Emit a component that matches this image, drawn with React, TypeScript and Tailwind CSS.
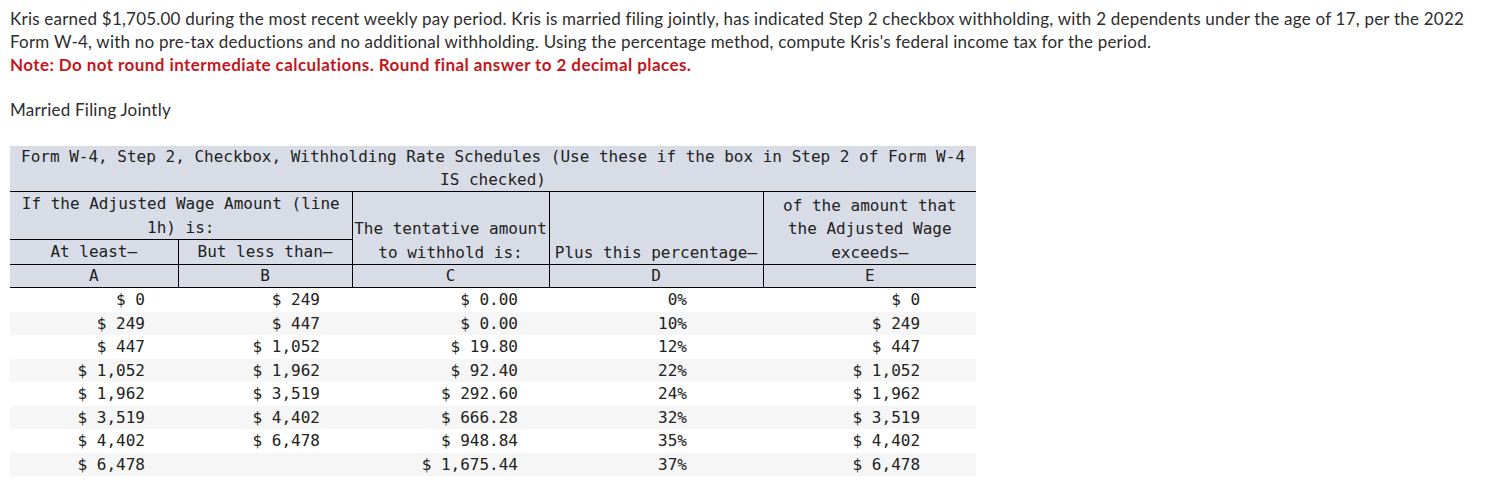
import React from 'react';

const rows = [
  ['$ 0', '$ 249', '$ 0.00', '0%', '$ 0'],
  ['$ 249', '$ 447', '$ 0.00', '10%', '$ 249'],
  ['$ 447', '$ 1,052', '$ 19.80', '12%', '$ 447'],
  ['$ 1,052', '$ 1,962', '$ 92.40', '22%', '$ 1,052'],
  ['$ 1,962', '$ 3,519', '$ 292.60', '24%', '$ 1,962'],
  ['$ 3,519', '$ 4,402', '$ 666.28', '32%', '$ 3,519'],
  ['$ 4,402', '$ 6,478', '$ 948.84', '35%', '$ 4,402'],
  ['$ 6,478', '', '$ 1,675.44', '37%', '$ 6,478'],
];

// right padding per column, to sit the figures where the schedule has them
const pad = ['pr-[33px]', 'pr-[32px]', 'pr-[31px]', 'pr-[76px]', 'pr-[56px]'];

export default function App() {
  return (
    <div className="min-h-screen bg-white px-[10px] pt-[7px]">
      <div className="font-['Lato','Helvetica',sans-serif] text-[17px] leading-[23px] tracking-[0.22px] text-[#2d2d2d]">
        <p className="whitespace-nowrap">
          Kris earned $1,705.00 during the most recent weekly pay period. Kris is married filing jointly, has
          indicated Step 2 checkbox withholding, with 2 dependents under the age of 17, per the 2022
          <br />
          Form W-4, with no pre-tax deductions and no additional withholding. Using the percentage method, compute
          Kris's federal income tax for the period.
        </p>
        <p className="whitespace-nowrap font-bold tracking-[0.42px] text-[#c3161c]">
          Note: Do not round intermediate calculations. Round final answer to 2 decimal places.
        </p>
        <p className="mt-[22px]">Married Filing Jointly</p>
      </div>

      <table className="mt-[25px] w-[966px] table-fixed border-collapse font-['DejaVu_Sans_Mono',monospace] text-[16px] text-[#222]">
        <colgroup>
          <col className="w-[168px]" />
          <col className="w-[174px]" />
          <col className="w-[197px]" />
          <col className="w-[214px]" />
          <col className="w-[213px]" />
        </colgroup>
        <thead className="bg-[#d8dce6]">
          <tr>
            <th colSpan={5} className="border-b border-black p-0 text-center font-normal leading-[22.5px]">
              Form W-4, Step 2, Checkbox, Withholding Rate Schedules (Use these if the box in Step 2 of Form W-4
              <br />
              IS checked)
            </th>
          </tr>
          <tr className="leading-[23.5px]">
            <th colSpan={2} className="border border-l-0 border-black p-0 text-center font-normal">
              If the Adjusted Wage Amount (line
              <br />
              1h) is:
            </th>
            <th rowSpan={2} className="border border-black p-0 text-center align-bottom font-normal">
              The tentative amount
              <br />
              to withhold is:
            </th>
            <th rowSpan={2} className="border border-black p-0 text-center align-bottom font-normal">
              Plus this percentage—
            </th>
            <th rowSpan={2} className="border border-r-0 border-black p-0 text-center align-bottom font-normal">
              of the amount that
              <br />
              the Adjusted Wage
              <br />
              exceeds—
            </th>
          </tr>
          <tr className="leading-[24px]">
            <th className="border border-l-0 border-black p-0 text-center font-normal">At least—</th>
            <th className="border border-black p-0 text-center font-normal">But less than—</th>
          </tr>
          <tr className="leading-[22px]">
            {['A', 'B', 'C', 'D', 'E'].map((l, i) => (
              <th
                key={l}
                className={`border border-black p-0 text-center font-normal ${i === 0 ? 'border-l-0' : ''} ${
                  i === 4 ? 'border-r-0' : ''
                }`}
              >
                {l}
              </th>
            ))}
          </tr>
        </thead>
        <tbody>
          {rows.map((r, i) => (
            <tr key={i} className={i % 2 === 1 ? 'bg-[#f6f6f6]' : 'bg-white'}>
              {r.map((v, j) => (
                <td key={j} className={`py-0 pl-0 text-right leading-[23.5px] ${pad[j]}`}>
                  {v}
                </td>
              ))}
            </tr>
          ))}
        </tbody>
      </table>
    </div>
  );
}
